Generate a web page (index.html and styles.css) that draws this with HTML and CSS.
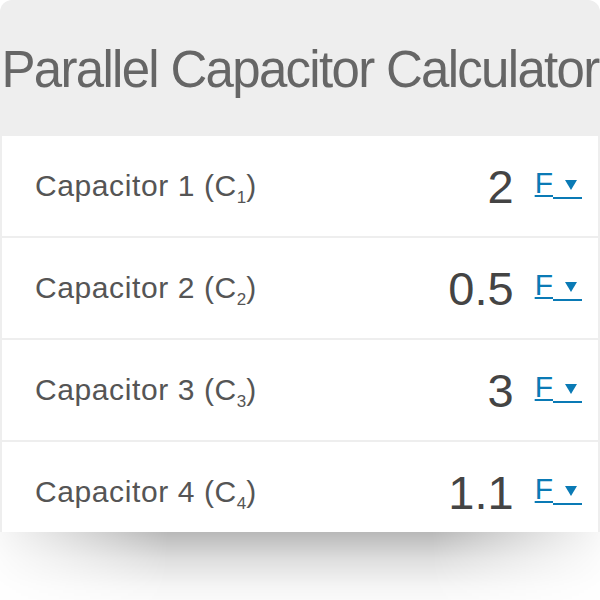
FILE: index.html
```html
<!DOCTYPE html>
<html lang="en">
<head>
<meta charset="UTF-8">
<title>Parallel Capacitor Calculator</title>
<link rel="stylesheet" href="styles.css">
</head>
<body>
<div class="calc">
  <h1 class="calc-title">Parallel Capacitor Calculator</h1>
  <div class="rows">
    <div class="row">
      <span class="label">Capacitor 1 (C<sub>1</sub>)</span>
      <span class="value">2</span>
      <span class="unit"><u>F</u><span class="caret"><i></i></span></span>
    </div>
    <div class="row">
      <span class="label">Capacitor 2 (C<sub>2</sub>)</span>
      <span class="value">0.5</span>
      <span class="unit"><u>F</u><span class="caret"><i></i></span></span>
    </div>
    <div class="row">
      <span class="label">Capacitor 3 (C<sub>3</sub>)</span>
      <span class="value">3</span>
      <span class="unit"><u>F</u><span class="caret"><i></i></span></span>
    </div>
    <div class="row">
      <span class="label">Capacitor 4 (C<sub>4</sub>)</span>
      <span class="value">1.1</span>
      <span class="unit"><u>F</u><span class="caret"><i></i></span></span>
    </div>
  </div>
</div>
<div class="calc-shadow"></div>
</body>
</html>
```

FILE: styles.css
```css
body {
  margin: 0;
  background: #fff;
  font-family: "Liberation Sans", Arial, sans-serif;
}

.calc {
  height: 532px;
  overflow: hidden;
  background: #eee;
  border-radius: 12px 12px 0 0;
}

/* soft shadow under the card */
.calc-shadow {
  height: 68px;
  background: linear-gradient(to bottom, rgba(0,0,0,.28), rgba(0,0,0,.13) 40%, rgba(0,0,0,.04) 80%, rgba(0,0,0,.02));
  -webkit-mask-image: linear-gradient(to right, rgba(0,0,0,.1), #000 28%, #000 72%, rgba(0,0,0,.1));
  mask-image: linear-gradient(to right, rgba(0,0,0,.1), #000 28%, #000 72%, rgba(0,0,0,.1));
}

.calc-title {
  margin: 0;
  height: 136px;
  line-height: 140px;
  text-align: center;
  font-size: 51px;
  font-weight: normal;
  color: #666;
  letter-spacing: -1.7px;
  white-space: nowrap;
}

.rows {
  display: flex;
  flex-direction: column;
  gap: 2px;
  padding: 0 2px;
}

.row {
  display: flex;
  align-items: center;
  height: 100px;
  flex-shrink: 0;
  background: #fff;
  padding: 0 16px 0 33px;
}

.label {
  flex: 1;
  font-size: 30px;
  color: #555;
  letter-spacing: .6px;
}

.label sub {
  font-size: 17px;
  vertical-align: -7px;
  line-height: 0;
  letter-spacing: 0;
}

.value {
  font-size: 47px;
  color: #444;
  margin-right: 21px;
}

.unit {
  display: flex;
  align-items: baseline;
  color: #0a7ab5;
  font-size: 30px;
  line-height: 1;
  margin-bottom: 6px;
}

.unit u {
  text-decoration-thickness: 2px;
  text-underline-offset: 2px;
}

.caret {
  font-size: 0;
  padding: 0 5px 4px 12px;
  border-bottom: 2px solid #0a7ab5;
}

.caret i {
  display: inline-block;
  margin-bottom: 3px;
  border-top: 10px solid #0a7ab5;
  border-left: 6px solid transparent;
  border-right: 6px solid transparent;
}
```
